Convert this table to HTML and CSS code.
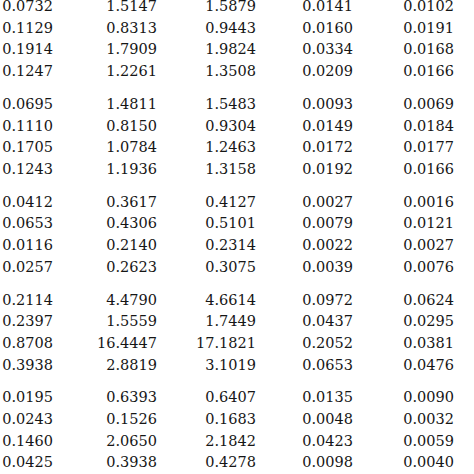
FILE: index.html
```html
<!DOCTYPE html>
<html>
<head>
<meta charset="utf-8">
<link rel="stylesheet" href="styles.css">
</head>
<body>
<div class="table">
  <div class="group">
    <div class="row"><span>0.0732</span><span>1.5147</span><span>1.5879</span><span>0.0141</span><span>0.0102</span></div>
    <div class="row"><span>0.1129</span><span>0.8313</span><span>0.9443</span><span>0.0160</span><span>0.0191</span></div>
    <div class="row"><span>0.1914</span><span>1.7909</span><span>1.9824</span><span>0.0334</span><span>0.0168</span></div>
    <div class="row"><span>0.1247</span><span>1.2261</span><span>1.3508</span><span>0.0209</span><span>0.0166</span></div>
  </div>
  <div class="group">
    <div class="row"><span>0.0695</span><span>1.4811</span><span>1.5483</span><span>0.0093</span><span>0.0069</span></div>
    <div class="row"><span>0.1110</span><span>0.8150</span><span>0.9304</span><span>0.0149</span><span>0.0184</span></div>
    <div class="row"><span>0.1705</span><span>1.0784</span><span>1.2463</span><span>0.0172</span><span>0.0177</span></div>
    <div class="row"><span>0.1243</span><span>1.1936</span><span>1.3158</span><span>0.0192</span><span>0.0166</span></div>
  </div>
  <div class="group">
    <div class="row"><span>0.0412</span><span>0.3617</span><span>0.4127</span><span>0.0027</span><span>0.0016</span></div>
    <div class="row"><span>0.0653</span><span>0.4306</span><span>0.5101</span><span>0.0079</span><span>0.0121</span></div>
    <div class="row"><span>0.0116</span><span>0.2140</span><span>0.2314</span><span>0.0022</span><span>0.0027</span></div>
    <div class="row"><span>0.0257</span><span>0.2623</span><span>0.3075</span><span>0.0039</span><span>0.0076</span></div>
  </div>
  <div class="group">
    <div class="row"><span>0.2114</span><span>4.4790</span><span>4.6614</span><span>0.0972</span><span>0.0624</span></div>
    <div class="row"><span>0.2397</span><span>1.5559</span><span>1.7449</span><span>0.0437</span><span>0.0295</span></div>
    <div class="row"><span>0.8708</span><span>16.4447</span><span>17.1821</span><span>0.2052</span><span>0.0381</span></div>
    <div class="row"><span>0.3938</span><span>2.8819</span><span>3.1019</span><span>0.0653</span><span>0.0476</span></div>
  </div>
  <div class="group">
    <div class="row"><span>0.0195</span><span>0.6393</span><span>0.6407</span><span>0.0135</span><span>0.0090</span></div>
    <div class="row"><span>0.0243</span><span>0.1526</span><span>0.1683</span><span>0.0048</span><span>0.0032</span></div>
    <div class="row"><span>0.1460</span><span>2.0650</span><span>2.1842</span><span>0.0423</span><span>0.0059</span></div>
    <div class="row"><span>0.0425</span><span>0.3938</span><span>0.4278</span><span>0.0098</span><span>0.0040</span></div>
  </div>
</div>
</body>
</html>
```
FILE: styles.css
```css
html, body {
  margin: 0;
  padding: 0;
  background: #ffffff;
}
body {
  width: 474px;
  height: 474px;
  overflow: hidden;
}
.table {
  margin-top: -4px;
  font-family: "DejaVu Serif", "Liberation Serif", serif;
  font-size: 14.5px;
  color: #161616;
}
.group {
  margin-bottom: 11.1px;
}
.row {
  display: grid;
  grid-template-columns: 53px 104px 99px 97px 101px;
  line-height: 21.7px;
  height: 21.7px;
  white-space: nowrap;
}
.row span {
  text-align: right;
}
```
